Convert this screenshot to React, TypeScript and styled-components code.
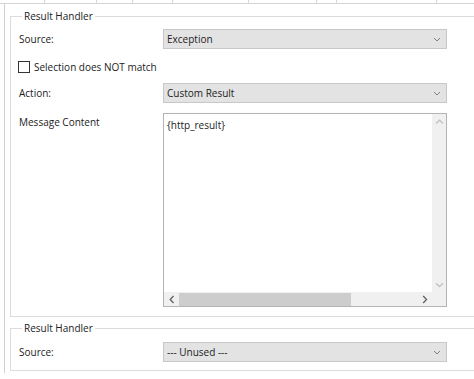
import React from "react";
import styled, { createGlobalStyle } from "styled-components";

const Global = createGlobalStyle`
  html, body { margin: 0; padding: 0; background: #ffffff; }
  body { font-family: "Open Sans", "Noto Sans", "Liberation Sans", sans-serif; font-size: 10px; color: #222222; }
  * { box-sizing: border-box; }
`;

const Page = styled.div`
  width: 474px;
  height: 379px;
  overflow: hidden;
  display: flex;
  flex-direction: column;
`;

const HeaderStrip = styled.div`
  height: 4px;
  display: flex;
  border-bottom: 1px solid #d4d4d4;
`;

const HeaderCell = styled.div<{ $w: number }>`
  width: ${(p) => p.$w}px;
  flex: none;
  border-right: 1px solid #d8d8d8;
`;

const Panel = styled.div`
  margin-left: 4px;
  border-left: 1px solid #d0d0d0;
  height: 369px;
  padding-left: 5px;
  display: flex;
  flex-direction: column;
`;

const Group = styled.fieldset<{ $top: number }>`
  margin: ${(p) => p.$top}px 0 0 0;
  padding: 0 0 0 8px;
  border: 1px solid #dcdcdc;
  border-right: none;
  width: 464px;
`;

const Legend = styled.legend`
  padding: 0 2px;
  margin-left: 3px;
  line-height: 16px;
`;

const Row = styled.div<{ $mt: number; $h?: number; $align?: string }>`
  display: flex;
  align-items: ${(p) => p.$align || "center"};
  margin-top: ${(p) => p.$mt}px;
  height: ${(p) => (p.$h ? `${p.$h}px` : "auto")};
`;

const Label = styled.div<{ $pt?: number }>`
  width: 144px;
  flex: none;
  padding-top: ${(p) => p.$pt || 0}px;
  line-height: 16px;
`;

const Select = styled.div`
  width: 284px;
  height: 20px;
  background: #e3e3e3;
  border: 1px solid #c8c8c8;
  display: flex;
  align-items: center;
  justify-content: space-between;
  padding: 0 5px 0 3px;
  line-height: 16px;
`;

const CheckRow = styled.label`
  display: flex;
  align-items: center;
  gap: 4px;
  margin-left: -1px;
  line-height: 16px;
`;

const Box = styled.span`
  width: 12px;
  height: 12px;
  border: 1px solid #333333;
  background: #ffffff;
  flex: none;
`;

const ScrollBox = styled.div`
  width: 284px;
  height: 194px;
  border: 1px solid #b4b4b4;
  display: grid;
  grid-template-columns: 1fr 14px;
  grid-template-rows: 1fr 14px;
  background: #ffffff;
`;

const Content = styled.div`
  padding: 3px 3px;
  line-height: 16px;
`;

const VBar = styled.div`
  background: #f0f0f0;
  display: flex;
  flex-direction: column;
  justify-content: space-between;
  align-items: center;
  padding: 5px 0 4px;
`;

const HBar = styled.div`
  background: #f0f0f0;
  display: flex;
  align-items: center;
`;

const ArrowCell = styled.div`
  width: 15px;
  height: 14px;
  display: flex;
  align-items: center;
  justify-content: center;
  flex: none;
`;

const Thumb = styled.div`
  height: 13px;
  width: 172px;
  background: #cdcdcd;
  flex: none;
`;

const Spacer = styled.div`
  flex: 1;
`;

const Corner = styled.div`
  background: #f0f0f0;
`;

const Chevron = ({ color = "#808080" }: { color?: string }) => (
  <svg width="8" height="5" viewBox="0 0 8 5">
    <path d="M1 1 L4 4 L7 1" fill="none" stroke={color} strokeWidth="1" />
  </svg>
);

const Arrow = ({ dir, color }: { dir: "up" | "down" | "left" | "right"; color: string }) => {
  const d =
    dir === "up"
      ? "M1 4.5 L4.5 1.2 L8 4.5"
      : dir === "down"
      ? "M1 1.2 L4.5 4.5 L8 1.2"
      : dir === "left"
      ? "M4.5 1 L1.2 4.5 L4.5 8"
      : "M1.2 1 L4.5 4.5 L1.2 8";
  const horiz = dir === "left" || dir === "right";
  return (
    <svg width={horiz ? 6 : 9} height={horiz ? 9 : 6} viewBox={horiz ? "0 0 6 9" : "0 0 9 6"}>
      <path d={d} fill="none" stroke={color} strokeWidth="1.3" />
    </svg>
  );
};

export default function App() {
  return (
    <Page>
      <Global />
      <HeaderStrip>
        <HeaderCell $w={45} />
        <HeaderCell $w={52} />
        <HeaderCell $w={36} />
        <HeaderCell $w={40} />
        <HeaderCell $w={76} />
        <HeaderCell $w={68} />
        <HeaderCell $w={20} />
        <HeaderCell $w={100} />
      </HeaderStrip>
      <Panel>
        <Group $top={4}>
          <Legend>Result Handler</Legend>
          <Row $mt={5}>
            <Label>Source:</Label>
            <Select>
              <span>Exception</span>
              <Chevron />
            </Select>
          </Row>
          <Row $mt={8} $h={20}>
            <CheckRow>
              <Box />
              <span>Selection does NOT match</span>
            </CheckRow>
          </Row>
          <Row $mt={6}>
            <Label>Action:</Label>
            <Select>
              <span>Custom Result</span>
              <Chevron />
            </Select>
          </Row>
          <Row $mt={10} $align="flex-start">
            <Label $pt={1}>Message Content</Label>
            <ScrollBox>
              <Content>{"{http_result}"}</Content>
              <VBar>
                <Arrow dir="up" color="#c0c0c0" />
                <Arrow dir="down" color="#c0c0c0" />
              </VBar>
              <HBar>
                <ArrowCell>
                  <Arrow dir="left" color="#606060" />
                </ArrowCell>
                <Thumb />
                <Spacer />
                <ArrowCell>
                  <Arrow dir="right" color="#606060" />
                </ArrowCell>
              </HBar>
              <Corner />
            </ScrollBox>
          </Row>
          <Row $mt={0} $h={9} />
        </Group>
        <Group $top={3}>
          <Legend>Result Handler</Legend>
          <Row $mt={6}>
            <Label>Source:</Label>
            <Select>
              <span>--- Unused ---</span>
              <Chevron />
            </Select>
          </Row>
          <Row $mt={0} $h={8} />
        </Group>
      </Panel>
    </Page>
  );
}
